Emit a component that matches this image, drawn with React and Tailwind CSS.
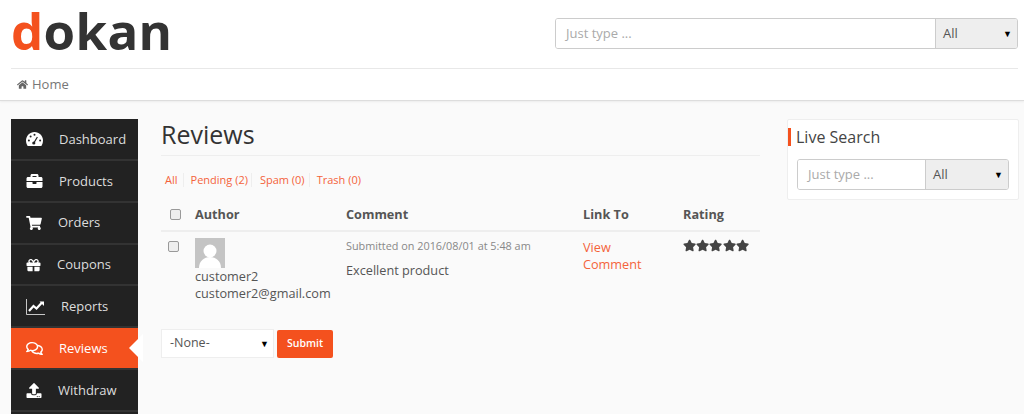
import React from 'react';
import { FaBriefcase, FaShoppingCart, FaGift, FaRegComments, FaUpload, FaHome, FaStar } from 'react-icons/fa';

const GaugeIcon = ({ className }) => (
  <svg viewBox="0 0 17 14" className={className}>
    <path d="M8.5 0C3.8 0 0 3.8 0 8.5c0 2.2.7 4 1.6 5.5h13.8c.9-1.5 1.6-3.3 1.6-5.5C17 3.8 13.2 0 8.5 0z" fill="currentColor" />
    <g fill="#222222">
      <circle cx="8.5" cy="2.8" r="1" />
      <circle cx="4.6" cy="4.4" r="1" />
      <circle cx="2.9" cy="8.4" r="1" />
      <circle cx="14.1" cy="8.4" r="1" />
      <circle cx="7.8" cy="11" r="1.6" />
    </g>
    <path d="M7.8 11l3.6-6" stroke="#222222" strokeWidth="1.2" />
  </svg>
);

const ChartIcon = ({ className }) => (
  <svg viewBox="0 0 19 16" className={className} fill="none">
    <path d="M.5 0v15.5H19" stroke="currentColor" strokeOpacity="0.75" />
    <path d="M3 12l4.5-5 3 2.5L16 3.5" stroke="currentColor" strokeWidth="2.2" />
    <path d="M13.5 2.5H18v4.5z" fill="currentColor" />
  </svg>
);

const menu = [
  { label: 'Dashboard', Icon: GaugeIcon, iconBox: 'w-[17px] h-[14px]', textMl: 'ml-0' },
  { label: 'Products', Icon: FaBriefcase, iconBox: 'w-[17px] h-[16px]', textMl: 'ml-0' },
  { label: 'Orders', Icon: FaShoppingCart, iconBox: 'w-[16px] h-[14px]', textMl: 'ml-[-1px]' },
  { label: 'Coupons', Icon: FaGift, iconBox: 'w-[15px] h-[14px]', textMl: 'ml-[-2px]' },
  { label: 'Reports', Icon: ChartIcon, iconBox: 'w-[19px] h-[16px]', textMl: 'ml-[2px]' },
  { label: 'Reviews', Icon: FaRegComments, iconBox: 'w-[17px] h-[15px]', textMl: 'ml-0', active: true },
  { label: 'Withdraw', Icon: FaUpload, iconBox: 'w-[16px] h-[15px]', textMl: 'ml-[-1px]' },
];

const SearchBox = ({ inputWidth, selectWidth }) => (
  <div className="flex w-fit h-[31px] border border-[#cccccc] rounded-[3px] overflow-hidden text-[13px]">
    <div className={`${inputWidth} bg-white pl-[10px] flex items-center text-[#aaaaaa]`}>Just type ...</div>
    <div className={`${selectWidth} bg-[#eeeeee] border-l border-[#cccccc] pl-[7px] pr-[5px] flex items-center justify-between text-[#555555]`}>
      <span>All</span>
      <span className="text-[9px] text-black">▼</span>
    </div>
  </div>
);

export default function App() {
  return (
    <div className="h-[414px] overflow-hidden bg-[#fafafa]" style={{ fontFamily: '"Open Sans", sans-serif' }}>
      {/* Header */}
      <div className="h-[101px] bg-white border-b border-[#dddddd] shadow-[0_1px_2px_rgba(0,0,0,0.06)] pl-[11px] pr-[6px]">
        <div className="h-[69px] border-b border-[#e8e8e8] flex items-start justify-between">
          <div className="text-[51px] leading-[60px] font-bold tracking-[0.3px] text-[#333333]">
            <span className="text-[#f4511e]">d</span>okan
          </div>
          <div className="mt-[18px]">
            <SearchBox inputWidth="w-[379px]" selectWidth="w-[82px]" />
          </div>
        </div>
        <div className="flex items-center h-[31px] pl-[6px] text-[13px] text-[#777777] gap-[4px]">
          <FaHome className="w-[11px] h-[11px] text-[#666666]" />
          <span>Home</span>
        </div>
      </div>

      <div className="flex pl-[11px] pt-[18px]">
        {/* Sidebar */}
        <div className="w-[127px] h-[300px] shrink-0 bg-[#222222]">
          {menu.map(({ label, Icon, iconBox, textMl, active }) => (
            <div
              key={label}
              className={`relative h-[41.85px] pt-[1px] flex items-center border-b-2 border-[#333333] text-[13px] ${active ? 'bg-[#f4511e] text-white' : 'text-[#dddddd]'}`}
            >
              <div className="w-[33px] ml-[15px] shrink-0">
                <Icon className={`${iconBox} text-white`} />
              </div>
              <span className={textMl}>{label}</span>
              {active && (
                <div className="absolute right-[-5px] top-[6px] w-0 h-0 border-y-[14px] border-y-transparent border-r-[14px] border-r-white" />
              )}
            </div>
          ))}
        </div>

        {/* Main */}
        <div className="w-[599px] ml-[23px] shrink-0">
          <h1 className="text-[25px] leading-[30px] text-[#333333] border-b border-[#eeeeee] h-[37px]">Reviews</h1>
          <div className="flex items-center mt-[17px] text-[11px] leading-[14px] text-[#f4633a] pl-[4px]">
            <span className="pr-[5px] border-r border-[#eeeeee]">All</span>
            <span className="pl-[7px] pr-[3px] border-r border-[#eeeeee]">Pending (2)</span>
            <span className="pl-[8px] pr-[4px] border-r border-[#eeeeee]">Spam (0)</span>
            <span className="pl-[7px]">Trash (0)</span>
          </div>

          <table className="w-full mt-[12px] text-[12.7px] text-[#555555] table-fixed">
            <thead>
              <tr className="border-b-2 border-[#eeeeee] h-[32px] text-left">
                <th className="w-[34px] pl-[9px]">
                  <div className="w-[11px] h-[11px] border border-[#999999] rounded-[2px] bg-[#eeeeee]" />
                </th>
                <th className="w-[151px] font-bold">Author</th>
                <th className="w-[237px] font-bold">Comment</th>
                <th className="w-[100px] font-bold">Link To</th>
                <th className="font-bold">Rating</th>
              </tr>
            </thead>
            <tbody>
              <tr className="align-top">
                <td className="pl-[7px] pt-[9px]">
                  <div className="w-[11px] h-[11px] border border-[#999999] rounded-[2px] bg-[#eeeeee]" />
                </td>
                <td className="pt-[6px] pb-[5px]">
                  <svg viewBox="0 0 30 30" className="w-[30px] h-[30px] block">
                    <rect width="30" height="30" fill="#c4c4c4" />
                    <circle cx="15" cy="13" r="6.5" fill="#ffffff" />
                    <path d="M4 30c0-7 5-11 11-11s11 4 11 11z" fill="#ffffff" />
                  </svg>
                  <div className="leading-[17px]">customer2</div>
                  <div className="leading-[17px]">customer2@gmail.com</div>
                </td>
                <td className="pt-[7px]">
                  <div className="text-[10.85px] leading-[14px] text-[#888888]">Submitted on 2016/08/01 at 5:48 am</div>
                  <div className="mt-[9px] leading-[16px]">Excellent product</div>
                </td>
                <td className="pt-[7px] text-[#f4633a] leading-[17px]">
                  <div>View</div>
                  <div>Comment</div>
                </td>
                <td className="pt-[7px]">
                  <div className="flex text-[#444444]">
                    {[0, 1, 2, 3, 4].map(i => <FaStar key={i} className="w-[13.2px] h-[13px]" />)}
                  </div>
                </td>
              </tr>
            </tbody>
          </table>

          <div className="flex mt-[22px] gap-[3px]">
            <div className="w-[113px] h-[29px] bg-white border border-[#eeeeee] flex items-center justify-between pl-[8px] pr-[4px] text-[12.5px] text-[#555555]">
              <span>-None-</span>
              <span className="text-[9px] text-black">▼</span>
            </div>
            <div className="w-[56px] h-[28px] mt-[1px] bg-[#f4511e] rounded-[2px] text-white text-[10.5px] font-semibold flex items-center justify-center">Submit</div>
          </div>
        </div>

        {/* Right widget */}
        <div className="w-[232px] h-[81px] ml-[27px] bg-white border border-[#eeeeee] rounded-[2px] shrink-0">
          <div className="flex items-center h-[18px] mt-[8px] border-l-[3px] border-[#f4511e] pl-[5px] text-[16px] text-[#444444]">Live Search</div>
          <div className="mt-[13px] ml-[9px]">
            <SearchBox inputWidth="w-[127px]" selectWidth="w-[83px]" />
          </div>
        </div>
      </div>
    </div>
  );
}
